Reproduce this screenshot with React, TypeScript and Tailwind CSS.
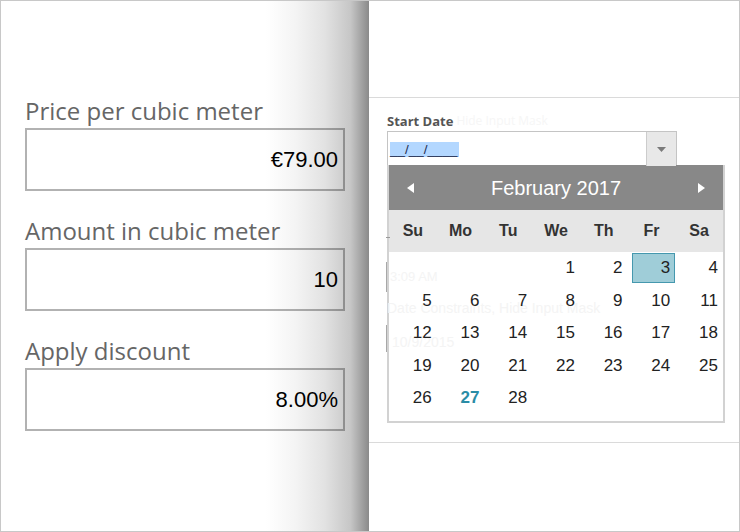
import React from "react";

const fields = [
  { label: "Price per cubic meter", value: "€79.00" },
  { label: "Amount in cubic meter", value: "10" },
  { label: "Apply discount", value: "8.00%" },
];

const dayNames = ["Su", "Mo", "Tu", "We", "Th", "Fr", "Sa"];

// February 2017 starts on a Wednesday
const days: (number | null)[] = [null, null, null, ...Array.from({ length: 28 }, (_, i) => i + 1)];

export default function App() {
  return (
    <div className="w-[740px] h-[532px] flex border border-[#c8c8c8] bg-white overflow-hidden">
      {/* LEFT: form page with curled shadow */}
      <div className="w-[368px] shrink-0 h-full pt-[95px] pl-[24px] flex flex-col gap-[25px] bg-[linear-gradient(to_right,#ffffff_0%,#ffffff_72%,#f4f4f4_80%,#e2e2e2_88%,#c6c6c6_95%,#8a8a8a_100%)]">
        {fields.map((f) => (
          <div key={f.label} className="flex flex-col">
            <label className="text-[24px] leading-[30px] text-[#666] font-['Open_Sans',sans-serif]">
              {f.label}
            </label>
            <div className="mt-[2px] w-[320px] h-[63px] border-2 border-black/30 flex items-center justify-end pr-[5px]">
              <span className="text-[22px] text-black font-['Liberation_Sans',Arial,sans-serif]">
                {f.value}
              </span>
            </div>
          </div>
        ))}
      </div>

      {/* RIGHT: date picker panel */}
      <div className="flex-1 h-full flex flex-col bg-white font-['Liberation_Sans',Arial,sans-serif]">
        <div className="h-[97px] shrink-0 border-b border-[#dadada]" />

        <div className="relative h-[345px] shrink-0 border-b border-[#dadada] pt-[15px] pl-[18px]">
          {/* leftover input edges peeking out from under the popup */}
          <div className="absolute left-[17px] top-[139px] w-[4px] h-[1px] bg-[#9a9a9a]" />
          <div className="absolute left-[17px] top-[164px] w-[1px] h-[30px] bg-[#a8a8a8]" />
          <div className="absolute left-[17px] top-[227px] w-[1px] h-[27px] bg-[#a8a8a8]" />

          <div className="flex items-center h-[16px]">
            <span className="text-[13px] leading-[16px] font-bold text-[#555] font-['Open_Sans',sans-serif]">
              Start Date
            </span>
            <span className="ml-[3px] text-[12px] leading-[16px] text-[#f6f6f6] font-['Open_Sans',sans-serif]">
              Hide Input Mask
            </span>
          </div>

          <div className="mt-[2px] w-[290px] h-[35px] flex border border-[#c4c4c4] border-b-0">
            <div className="flex-1 flex items-center pl-[2px]">
              <span className="text-[13.5px] leading-[15px] bg-[#b3d7ff] text-[#1d2b4c] pr-[1px]">
                __/__/____
              </span>
            </div>
            <div className="w-[30px] shrink-0 bg-[#e8e8e8] border-l border-[#cccccc] flex items-center justify-center">
              <svg width="9" height="5" viewBox="0 0 9 5">
                <path d="M0 0h9L4.5 5z" fill="#7a7a7a" />
              </svg>
            </div>
          </div>

          {/* calendar popup */}
          <div className="w-[338px] border-x-2 border-b-2 border-[#d2d2d2] -mt-[1px]">
            <div className="h-[45px] bg-[#888888] flex items-center justify-between px-[18px]">
              <svg width="7" height="10" viewBox="0 0 7 10">
                <path d="M7 0v10L0 5z" fill="#ffffff" />
              </svg>
              <span className="text-[20px] text-white">February 2017</span>
              <svg width="7" height="10" viewBox="0 0 7 10">
                <path d="M0 0v10L7 5z" fill="#ffffff" />
              </svg>
            </div>

            <div className="h-[42px] bg-[#e6e6e6] grid grid-cols-7 items-center">
              {dayNames.map((d) => (
                <span key={d} className="text-center text-[16px] font-bold text-[#333]">
                  {d}
                </span>
              ))}
            </div>

            <div className="relative pt-[1px] pb-[8px]">
              {/* faded form text showing through the popup */}
              <div className="absolute inset-0 text-[#f4f4f4] pointer-events-none">
                <div className="absolute left-[1px] top-[18px] text-[13px] leading-none">3:09 AM</div>
                <div className="absolute left-[-2px] top-[49px] text-[14px] leading-none">
                  Date Constraints, Hide Input Mask
                </div>
                <div className="absolute left-[3px] top-[83px] text-[14px] leading-none">10/9/2015</div>
              </div>

              <div className="relative grid grid-cols-7 gap-x-[4px] gap-y-[2.5px] pl-[4px]">
                {days.map((d, i) => (
                  <div
                    key={i}
                    className={
                      d === 3
                        ? "h-[30px] flex items-center justify-end pr-[4px] text-[17px] text-[#222] bg-[#9fcdd8] border border-[#4598ae]"
                        : d === 27
                        ? "h-[30px] flex items-center justify-end pr-[5px] text-[17px] font-bold text-[#2a8ca6]"
                        : "h-[30px] flex items-center justify-end pr-[5px] text-[17px] text-[#222]"
                    }
                  >
                    {d ?? ""}
                  </div>
                ))}
              </div>
            </div>
          </div>
        </div>

        <div className="flex-1" />
      </div>
    </div>
  );
}
